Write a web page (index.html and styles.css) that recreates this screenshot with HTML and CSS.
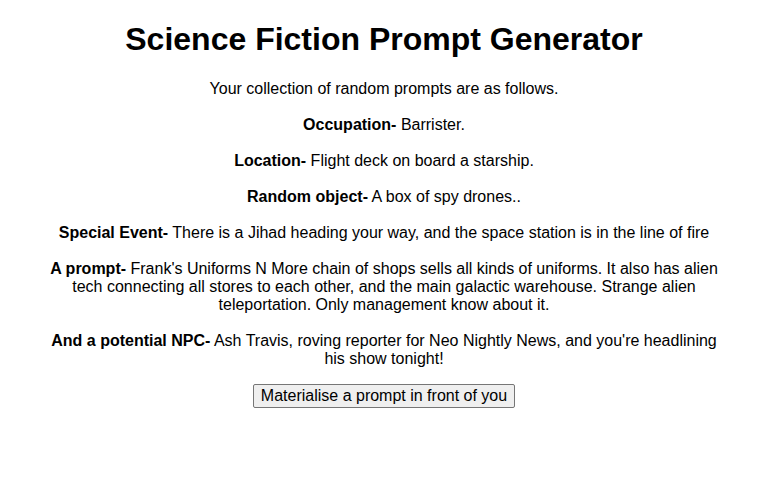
FILE: index.html
```html
<!DOCTYPE html>
<html>
<head>
<meta charset="utf-8">
<title>Science Fiction Prompt Generator</title>
<link rel="stylesheet" href="styles.css">
</head>
<body>
<div class="page">
<h1 class="title">Science Fiction Prompt Generator</h1>
<p class="line">Your collection of random prompts are as follows.</p>
<p class="line"><b>Occupation-</b> Barrister.</p>
<p class="line"><b>Location-</b> Flight deck on board a starship.</p>
<p class="line"><b>Random object-</b> A box of spy drones..</p>
<p class="line"><b>Special Event-</b> There is a Jihad heading your way, and the space station is in the line of fire</p>
<p class="line"><b>A prompt-</b> Frank's Uniforms N More chain of shops sells all kinds of uniforms. It also has alien tech connecting all stores to each other, and the main galactic warehouse. Strange alien teleportation. Only management know about it.</p>
<p class="line line-last"><b>And a potential NPC-</b> Ash Travis, roving reporter for Neo Nightly News, and you're headlining his show tonight!</p>
<button class="btn" type="button">Materialise a prompt in front of you</button>
</div>
</body>
</html>
```
FILE: styles.css
```css
body {
  margin: 0;
  font-family: "Liberation Sans", Arial, sans-serif;
  font-size: 16px;
  color: #000;
  background: #fff;
}
.page {
  width: 678px;
  margin: 0 auto;
  padding-top: 21px;
  text-align: center;
}
.title {
  font-size: 32px;
  font-weight: bold;
  margin: 0 0 22px;
  line-height: 37px;
}
.line {
  margin: 18px 0;
  line-height: 18px;
}
.line-last {
  margin-bottom: 16px;
}
.btn {
  display: block;
  margin: 0 auto;
  font-family: "Liberation Sans", Arial, sans-serif;
  font-size: 16px;
  line-height: 19px;
  padding: 1px 7px 2px;
  background: #efefef;
  border: 1px solid #767676;
  border-radius: 2px;
  color: #000;
}
```
